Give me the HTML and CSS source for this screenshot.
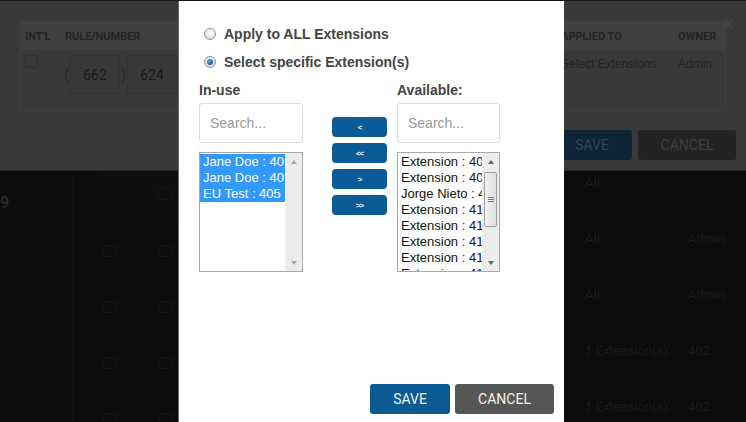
FILE: index.html
```html
<!DOCTYPE html>
<html lang="en">
<head>
<meta charset="utf-8">
<title>Select Extensions</title>
<link rel="stylesheet" href="styles.css">
</head>
<body>
<div class="page">
  <section class="dialog-bg">
    <div class="bg-card">
      <div class="bg-head">
        <span>INT'L</span><span>RULE/NUMBER</span><span>APPLIED TO</span><span>OWNER</span>
      </div>
      <div class="bg-row">
        <span class="bg-check"></span>
        <span class="bg-number"><span class="paren">(</span><span class="bg-input">662</span><span class="paren">)</span><span class="bg-input">624</span><span class="paren">-</span></span>
        <span class="bg-text">Select Extensions</span>
        <span class="bg-text">Admin</span>
      </div>
    </div>
    <div class="bg-actions">
      <span class="bg-btn bg-save">SAVE</span><span class="bg-btn bg-cancel">CANCEL</span>
    </div>
    <svg class="bg-close" width="9" height="8" viewBox="0 0 9 8"><path d="M1 0.5 L8 7.5 M8 0.5 L1 7.5" stroke="#464646" stroke-width="1.8"/></svg>
  </section>

  <section class="list-bg">
    <div class="lrow">
      <span class="c1"><span class="nine">9</span></span><span class="c2"></span>
      <span class="c3 first"><span class="sq sq-b"></span></span>
      <span class="c4"></span><span class="c5">All</span><span class="c6"></span>
    </div>
    <div class="lrow">
      <span class="c1"></span><span class="c2"></span>
      <span class="c3"><span class="sq sq-a"></span><span class="sq sq-b"></span></span>
      <span class="c4"></span><span class="c5">All</span><span class="c6">Admin</span>
    </div>
    <div class="lrow">
      <span class="c1"></span><span class="c2"></span>
      <span class="c3"><span class="sq sq-a"></span><span class="sq sq-b"></span></span>
      <span class="c4"></span><span class="c5">All</span><span class="c6">Admin</span>
    </div>
    <div class="lrow">
      <span class="c1"></span><span class="c2"></span>
      <span class="c3"><span class="sq sq-a"></span><span class="sq sq-b"></span></span>
      <span class="c4"></span><span class="c5">1 Extension(s)</span><span class="c6">402</span>
    </div>
    <div class="lrow">
      <span class="c1"></span><span class="c2"></span>
      <span class="c3"><span class="sq sq-a"></span><span class="sq sq-b"></span></span>
      <span class="c4"></span><span class="c5">1 Extension(s)</span><span class="c6">402</span>
    </div>
  </section>
</div>

<div class="modal">
  <div class="radio-row"><span class="radio"></span><span class="radio-label">Apply to ALL Extensions</span></div>
  <div class="radio-row"><span class="radio checked"></span><span class="radio-label">Select specific Extension(s)</span></div>

  <div class="picker">
    <div class="pick-col">
      <div class="pick-label">In-use</div>
      <div class="search">Search...</div>
      <div class="listbox">
        <div class="options">
          <div class="opt sel">Jane Doe : 401</div>
          <div class="opt sel">Jane Doe : 402</div>
          <div class="opt sel">EU Test : 405</div>
        </div>
        <div class="sbar">
          <span class="arrow up dim"></span>
          <span class="track"></span>
          <span class="arrow down dim"></span>
        </div>
      </div>
    </div>

    <div class="move-col">
      <div class="move-btn">&lt;</div>
      <div class="move-btn">&lt;&lt;</div>
      <div class="move-btn">&gt;</div>
      <div class="move-btn">&gt;&gt;</div>
    </div>

    <div class="pick-col">
      <div class="pick-label">Available:</div>
      <div class="search">Search...</div>
      <div class="listbox">
        <div class="options">
          <div class="opt">Extension : 403</div>
          <div class="opt">Extension : 404</div>
          <div class="opt">Jorge Nieto : 406</div>
          <div class="opt">Extension : 410</div>
          <div class="opt">Extension : 411</div>
          <div class="opt">Extension : 412</div>
          <div class="opt">Extension : 413</div>
          <div class="opt">Extension : 414</div>
        </div>
        <div class="sbar">
          <span class="arrow up"></span>
          <span class="track"><span class="thumb"><span class="grip"></span></span></span>
          <span class="arrow down"></span>
        </div>
      </div>
    </div>
  </div>

  <div class="modal-foot">
    <button class="btn save">SAVE</button>
    <button class="btn cancel">CANCEL</button>
  </div>
</div>
</body>
</html>
```

FILE: styles.css
```css
* { box-sizing: border-box; }
html, body { margin: 0; padding: 0; }
body {
  width: 746px;
  height: 422px;
  overflow: hidden;
  position: relative;
  background: #0c0c0c;
  font-family: "Liberation Sans", Arial, sans-serif;
}

/* ---------- dimmed background dialog ---------- */
.dialog-bg {
  position: relative;
  height: 171px;
  background: #393939;
  border-top: 1px solid #141414;
  border-bottom: 1px solid #262626;
  padding: 20px 10px 0 20px;
}
.bg-card {
  width: 706px;
  height: 90px;
  border: 1px solid #3f3f3f;
}
.bg-head, .bg-row {
  display: grid;
  grid-template-columns: 40px 496px 117px 1fr;
  padding-left: 4px;
}
.bg-head {
  height: 28px;
  align-items: center;
  background: #3f3f3f;
  font-family: Roboto, sans-serif;
  font-weight: bold;
  font-size: 11px;
  color: #242424;
  white-space: nowrap;
}
.bg-row {
  padding-top: 5px;
  height: 60px;
}
.bg-check {
  width: 13px;
  height: 13px;
  border: 1px solid #2e2e2e;
  border-radius: 2px;
}
.bg-number {
  display: flex;
  align-items: center;
  height: 39px;
  margin-left: -1px;
  font-family: Roboto, sans-serif;
  font-size: 14px;
  color: #1a1a1a;
}
.paren { width: 5px; color: #262626; }
.bg-input {
  width: 50px;
  height: 39px;
  border: 1px solid #333;
  border-radius: 2px;
  display: flex;
  align-items: center;
  justify-content: center;
  margin: 0 1px;
}
.bg-text {
  font-size: 12px;
  line-height: 16px;
  padding-top: 1px;
  color: #222;
  white-space: nowrap;
}
.bg-actions {
  display: flex;
  justify-content: flex-end;
  gap: 6px;
  margin-top: 19px;
}
.bg-btn {
  height: 30px;
  border-radius: 3px;
  display: flex;
  align-items: center;
  justify-content: center;
  font-family: Roboto, sans-serif;
  font-size: 14px;
}
.bg-save { width: 80px; background: #0e2436; color: #2f4457; }
.bg-cancel { width: 98px; background: #232323; color: #3f3f3f; }
.bg-close { position: absolute; left: 724px; top: 19px; }

/* ---------- darker page behind ---------- */
.list-bg { height: 251px; overflow: hidden; }
.lrow {
  display: grid;
  grid-template-columns: 72px 25px 81px 407px 103px 1fr;
  height: 56px;
  font-family: Roboto, sans-serif;
  font-size: 13px;
  color: #1b1b1b;
}
.lrow > span { line-height: 16px; padding-top: 4px; white-space: nowrap; }
.c2 { border-left: 1px solid #111; }
.c3 { position: relative; }
.c3.first { background: #0f0f0f; height: 53px; }
.nine {
  display: block;
  margin-top: 20px;
  font-weight: bold;
  font-size: 16px;
  color: #262626;
}
.sq {
  position: absolute;
  top: 18px;
  width: 14px;
  height: 12px;
  border: 1px solid #161616;
  border-radius: 2px;
}
.first .sq { top: 17px; }
.sq-a { left: 5px; }
.sq-b { left: 61px; }

/* ---------- modal ---------- */
.modal {
  position: absolute;
  left: 178px;
  top: 1px;
  width: 386px;
  height: 421px;
  background: #fff;
  border-left: 1px solid #6a6a6a;
  display: flex;
  flex-direction: column;
  padding: 19px 10px 8px 20px;
}
.radio-row {
  display: flex;
  align-items: center;
  height: 28px;
  padding-left: 5px;
}
.radio {
  width: 12px;
  height: 12px;
  border-radius: 50%;
  border: 1px solid #949494;
  background: radial-gradient(circle at 50% 35%, #ffffff 0%, #eaeaea 55%, #cfcfcf 100%);
  position: relative;
  flex: none;
}
.radio.checked::after {
  content: "";
  position: absolute;
  left: 2px;
  top: 2px;
  width: 6px;
  height: 6px;
  border-radius: 50%;
  background: radial-gradient(circle at 40% 35%, #6ab0e0 0%, #2a6fa8 50%, #143e66 100%);
}
.radio-label {
  margin-left: 8px;
  font-weight: bold;
  font-size: 14px;
  line-height: 28px;
  color: #444;
  white-space: nowrap;
}

.picker { display: flex; margin-top: 4px; }
.pick-col { width: 104px; }
.pick-col:last-child { width: 103px; }
.pick-label {
  font-weight: bold;
  font-size: 14px;
  line-height: 20px;
  color: #444;
}
.search {
  margin-top: 3px;
  height: 40px;
  border: 1px solid #dcdcdc;
  border-radius: 3px;
  padding-left: 10px;
  display: flex;
  align-items: center;
  font-size: 14px;
  color: #999;
}
.listbox {
  margin-top: 9px;
  height: 120px;
  border: 1px solid #a9a9a9;
  display: flex;
  overflow: hidden;
  background: #fff;
}
.options {
  flex: 1;
  min-width: 0;
  padding-top: 1px;
  overflow: hidden;
}
.opt {
  font-size: 13px;
  line-height: 16px;
  height: 16px;
  padding: 0 0 0 3px;
  white-space: nowrap;
  overflow: hidden;
  color: #111;
}
.opt.sel { background: #3399ff; color: #fff; }

.sbar {
  width: 17px;
  flex: none;
  display: flex;
  flex-direction: column;
  background: #ececec;
  border-left: 1px solid #f4f4f4;
}
.arrow {
  height: 17px;
  flex: none;
  display: flex;
  align-items: center;
  justify-content: center;
}
.arrow::before {
  content: "";
  width: 0;
  height: 0;
  border-left: 3.5px solid transparent;
  border-right: 3.5px solid transparent;
}
.arrow.up::before { border-bottom: 4px solid #606060; }
.arrow.down::before { border-top: 4px solid #606060; }
.arrow.dim.up::before { border-bottom-color: #a8a8a8; }
.arrow.dim.down::before { border-top-color: #a8a8a8; }
.track { flex: 1; padding: 2px 1px 0 1px; }
.thumb {
  display: flex;
  align-items: center;
  justify-content: center;
  width: 13px;
  height: 55px;
  border: 1px solid #a0a0a0;
  border-radius: 2px;
  background: linear-gradient(to right, #f3f3f3, #dedede);
}
.grip {
  width: 6px;
  height: 5px;
  border-top: 1px solid #777;
  border-bottom: 1px solid #777;
  position: relative;
}
.grip::after {
  content: "";
  position: absolute;
  left: 0;
  right: 0;
  top: 1px;
  border-top: 1px solid #777;
}

.move-col {
  width: 55px;
  margin: 0 10px 0 29px;
  padding-top: 37px;
}
.move-btn {
  height: 20px;
  margin-bottom: 6px;
  background: #0b5c96;
  border-radius: 4px;
  color: #e6eef6;
  font-weight: bold;
  font-size: 8px;
  display: flex;
  align-items: center;
  justify-content: center;
  letter-spacing: -1px;
}

.modal-foot {
  margin-top: auto;
  display: flex;
  justify-content: flex-end;
  gap: 5px;
}
.btn {
  height: 30px;
  border: none;
  border-radius: 3px;
  font-family: Roboto, sans-serif;
  font-size: 14px;
  color: #f2f2f2;
  padding: 0;
}
.btn.save { width: 80px; background: #0b5a94; }
.btn.cancel { width: 99px; background: #565656; }
```
